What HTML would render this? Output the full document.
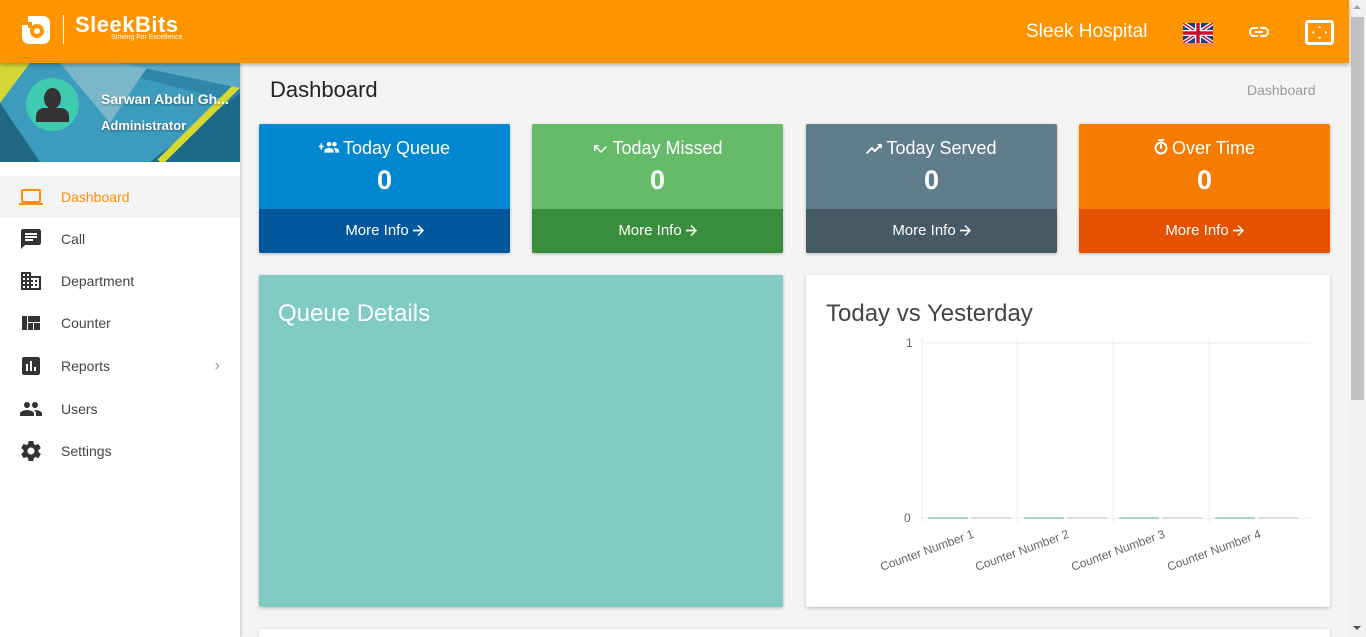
<!DOCTYPE html><html style="overflow:hidden;height:637px"><head><meta charset="utf-8"><style>
*{box-sizing:border-box;margin:0;padding:0}
html,body{overflow:hidden}
body{width:1366px;height:637px;background:#f4f4f4;font-family:"Liberation Sans",sans-serif;position:relative}
.hdr{position:absolute;left:0;top:0;width:1349px;height:63px;background:#fe9500;box-shadow:0 2px 4px rgba(0,0,0,.3);z-index:3;color:#fff}
.sb{position:absolute;left:0;top:63px;width:240px;height:574px;background:#fff;box-shadow:1px 0 3px rgba(0,0,0,.2)}
.prof{height:99px;background:#2f86a8;position:relative;overflow:hidden}
.nav div{height:42px;display:flex;align-items:center;font-size:14px;color:#444}
.nav svg{margin:0 18px 0 19px}
.scroll{position:absolute;right:0;top:0;width:17px;height:637px;background:#f1f1f1}
.card{position:absolute;top:124px;width:251px;height:129px;border-radius:2px;box-shadow:0 1px 3px rgba(0,0,0,.25);color:#fff;text-align:center;overflow:hidden}
.card .t{height:85px;padding-top:14px;font-size:18px}
.card .t svg{vertical-align:-1px;margin-right:4px}
.card .n{font-size:27px;font-weight:bold;margin-top:6px}
.card .b{height:44px;line-height:44px;font-size:15px}
.card .b svg{vertical-align:-1px;margin-left:4px}
</style></head><body>
<div class="hdr">
<svg style="position:absolute;left:21px;top:15px" width="30" height="30" viewBox="0 0 30 30"><rect x="1" y="1" width="28" height="28" rx="7" fill="#fff"/><circle cx="16" cy="16" r="7" fill="#fe9500"/><circle cx="16" cy="16" r="3" fill="#fff"/><rect x="1" y="1" width="6" height="9" fill="#fe9500"/><rect x="7" y="7" width="4" height="6" fill="#fe9500"/></svg>
<div style="position:absolute;left:63px;top:15px;width:1px;height:29px;background:#fff"></div>
<div style="position:absolute;left:75px;top:12px;font-size:22px;font-weight:bold;letter-spacing:.5px">SleekBits</div>
<div style="position:absolute;left:111px;top:34px;font-size:7px">Striving For Excellence</div>
<div style="position:absolute;left:1026px;top:21px;font-size:19px">Sleek Hospital</div>
<svg style="position:absolute;left:1183px;top:23px" width="30" height="20" viewBox="0 0 60 40"><rect width="60" height="40" fill="#1f3c8c"/><path d="M0 0L60 40M60 0L0 40" stroke="#fff" stroke-width="8"/><path d="M0 0L60 40M60 0L0 40" stroke="#c8102e" stroke-width="3"/><path d="M30 0V40M0 20H60" stroke="#fff" stroke-width="12"/><path d="M30 0V40M0 20H60" stroke="#c8102e" stroke-width="7"/></svg>
<svg style="position:absolute;left:1245px;top:20px" width="28" height="24" viewBox="0 0 24 24"><path d="M3.9 12c0-1.7 1.4-3.1 3.1-3.1h4V7H7c-2.8 0-5 2.2-5 5s2.2 5 5 5h4v-1.9H7c-1.7 0-3.1-1.4-3.1-3.1zM8 13h8v-2H8v2zm9-6h-4v1.9h4c1.7 0 3.1 1.4 3.1 3.1s-1.4 3.1-3.1 3.1h-4V17h4c2.8 0 5-2.2 5-5s-2.2-5-5-5z" fill="#fff"/></svg>
<svg style="position:absolute;left:1305px;top:20px" width="29" height="25" viewBox="0 0 29 25"><rect x="1.5" y="1.5" width="26" height="22" rx="2" fill="none" stroke="#fff" stroke-width="3"/><path d="M14.5 6l-2 2h4zM14.5 19l-2-2h4zM7 12.5l2-2v4zM22 12.5l-2-2v4z" fill="#fff"/></svg>
</div>
<div class="sb">
<div class="prof">
<svg style="position:absolute;left:0;top:0" width="240" height="99"><polygon points="0,0 80,0 240,40 240,99 0,99" fill="#3d9bbd"/><polygon points="60,0 150,0 110,60" fill="#7ab8c9"/><polygon points="0,40 40,99 0,99" fill="#1f6782"/><polygon points="150,99 240,30 240,99" fill="#1d6a88"/><polygon points="0,0 30,0 0,40" fill="#d4d636"/><line x1="160" y1="99" x2="240" y2="20" stroke="#d8d832" stroke-width="7"/><polygon points="120,0 240,0 240,25" fill="#5aaac6"/></svg>
<div style="position:absolute;left:26px;top:15px;width:53px;height:53px;border-radius:50%;background:#3fcbb0;overflow:hidden"><div style="position:absolute;left:18px;top:10px;width:17px;height:21px;border-radius:50%;background:#333"></div><div style="position:absolute;left:10px;top:30px;width:33px;height:14px;border-radius:8px 8px 0 0;background:#333"></div></div>
<div style="position:absolute;left:101px;top:28px;color:#fff;font-size:14px;font-weight:bold;text-shadow:0 1px 2px rgba(0,0,0,.4)">Sarwan Abdul Gh...</div>
<div style="position:absolute;left:101px;top:55px;color:#fff;font-size:13px;font-weight:bold;text-shadow:0 1px 2px rgba(0,0,0,.4)">Administrator</div>
</div>
<div class="nav" style="margin-top:14px">
<div style="background:#f4f4f4;color:#fe8f00"><svg width="24" height="24" viewBox="0 0 24 24"><path d="M20 18c1.1 0 2-.9 2-2V6c0-1.1-.9-2-2-2H4c-1.1 0-2 .9-2 2v10c0 1.1.9 2 2 2H0v2h24v-2h-4zM4 6h16v10H4V6z" fill="#fe8f00"/></svg>Dashboard</div>
<div><svg width="24" height="24" viewBox="0 0 24 24"><path d="M20 2H4c-1.1 0-2 .9-2 2v18l4-4h14c1.1 0 2-.9 2-2V4c0-1.1-.9-2-2-2zM6 9h12v2H6V9zm8 5H6v-2h8v2zm4-6H6V6h12v2z" fill="#333"/></svg>Call</div>
<div><svg width="24" height="24" viewBox="0 0 24 24"><path d="M12 7V3H2v18h20V7H12zM6 19H4v-2h2v2zm0-4H4v-2h2v2zm0-4H4V9h2v2zm0-4H4V5h2v2zm4 12H8v-2h2v2zm0-4H8v-2h2v2zm0-4H8V9h2v2zm0-4H8V5h2v2zm10 12h-8v-2h2v-2h-2v-2h2v-2h-2V9h8v10zm-2-8h-2v2h2v-2zm0 4h-2v2h2v-2z" fill="#333"/></svg>Department</div>
<div><svg width="24" height="24" viewBox="0 0 24 24"><path d="M3 5v14h5V5H3zm6 0v6h12V5H9zm0 14h5v-7H9v7zm6 0h6v-7h-6v7z" fill="#333"/></svg>Counter</div>
<div style="height:44px"><svg width="24" height="24" viewBox="0 0 24 24"><path d="M19 3H5c-1.1 0-2 .9-2 2v14c0 1.1.9 2 2 2h14c1.1 0 2-.9 2-2V5c0-1.1-.9-2-2-2zM9 17H7v-7h2v7zm4 0h-2V7h2v10zm4 0h-2v-4h2v4z" fill="#333"/></svg>Reports<span style="margin-left:auto;margin-right:20px;color:#999;font-size:16px">›</span></div>
<div><svg width="24" height="24" viewBox="0 0 24 24"><path d="M16 11c1.66 0 2.99-1.34 2.99-3S17.66 5 16 5c-1.66 0-3 1.34-3 3s1.34 3 3 3zm-8 0c1.66 0 2.99-1.34 2.99-3S9.66 5 8 5C6.340 5 5 6.34 5 8s1.34 3 3 3zm0 2c-2.33 0-7 1.17-7 3.5V19h14v-2.5c0-2.33-4.67-3.5-7-3.5zm8 0c-.29 0-.62.02-.97.05 1.16.84 1.970 1.97 1.97 3.45V19h6v-2.5c0-2.33-4.67-3.5-7-3.5z" fill="#333"/></svg>Users</div>
<div><svg width="24" height="24" viewBox="0 0 24 24"><path d="M19.4 13c.04-.3.06-.6.06-1s-.02-.7-.07-1l2.1-1.6c.2-.15.24-.42.12-.64l-2-3.46c-.12-.22-.39-.3-.61-.22l-2.5 1c-.52-.4-1.08-.73-1.69-.98l-.38-2.65A.49.49 0 0 0 14 2h-4c-.25 0-.46.18-.49.42l-.38 2.650c-.61.25-1.17.59-1.69.98l-2.49-1c-.23-.09-.49 0-.61.22l-2 3.46c-.13.22-.07.49.12.64L4.57 11c-.04.32-.07.65-.07 1s.03.68.07 1l-2.11 1.65c-.19.15-.24.42-.12.64l2 3.46c.12.22.39.3.61.22l2.49-1c.52.4 1.08.73 1.69.98l.38 2.65c.03.24.24.42.49.42h4c.25 0 .46-.18.49-.42l.38-2.65c.61-.25 1.17-.59 1.69-.98l2.49 1c.23.09.49 0 .61-.22l2-3.46c.12-.22.07-.49-.12-.64L19.4 13zM12 15.5c-1.93 0-3.5-1.57-3.5-3.5s1.57-3.5 3.5-3.5 3.5 1.57 3.5 3.5-1.57 3.5-3.5 3.5z" fill="#333"/></svg>Settings</div>
</div></div>
<div style="position:absolute;left:270px;top:77px;font-size:22px;color:#222">Dashboard</div>
<div style="position:absolute;left:1247px;top:82px;font-size:14px;color:#999">Dashboard</div>
<div class="card" style="left:259px;background:#0288d1"><div class="t"><svg width="20" height="14" viewBox="0 0 26 18"><path d="M4 6V3H2v3H0v2h2v3h2V8h2V6zM13 7a3 3 0 1 0 0-6 3 3 0 0 0 0 6zm7 0a3 3 0 1 0 0-6 3 3 0 0 0 0 6zM13 9c-2.7 0-6 1.3-6 3.5V15h12v-2.5C19 10.3 15.7 9 13 9zm7 0c-.3 0-.6 0-1 .1 1.2.9 2 2 2 3.4V15h5v-2.5C26 10.3 22.7 9 20 9z" fill="#fff"/></svg>Today Queue<div class="n">0</div></div><div class="b" style="background:#01579b">More Info<svg width="11" height="11" viewBox="0 0 12 12"><path d="M6 0L4.9 1.1 8.9 5H0v2h8.9l-4 3.9L6 12l6-6z" fill="#fff"/></svg></div></div>
<div class="card" style="left:532px;background:#66bb6a"><div class="t"><svg width="16" height="12" viewBox="0 0 16 12"><path d="M2 2v6h1.5V4.6L9 10l6-6-1-1-5 5-4.5-4.5H7V2z" fill="#fff"/></svg>Today Missed<div class="n">0</div></div><div class="b" style="background:#388e3c">More Info<svg width="11" height="11" viewBox="0 0 12 12"><path d="M6 0L4.9 1.1 8.9 5H0v2h8.9l-4 3.9L6 12l6-6z" fill="#fff"/></svg></div></div>
<div class="card" style="left:806px;background:#607d8b"><div class="t"><svg width="16" height="12" viewBox="0 0 16 12"><path d="M11 1l1.8 1.8-4 4-3-3L0 9.6 1.2 11l4.6-4.6 3 3 5.2-5.2L15.8 6V1z" fill="#fff"/></svg>Today Served<div class="n">0</div></div><div class="b" style="background:#455a64">More Info<svg width="11" height="11" viewBox="0 0 12 12"><path d="M6 0L4.9 1.1 8.9 5H0v2h8.9l-4 3.9L6 12l6-6z" fill="#fff"/></svg></div></div>
<div class="card" style="left:1079px;background:#f57c00"><div class="t"><svg width="14" height="16" viewBox="0 0 14 16"><rect x="4" y="0" width="6" height="2" fill="#fff"/><circle cx="7" cy="9" r="5.5" fill="none" stroke="#fff" stroke-width="2"/><rect x="6" y="5" width="2" height="4.5" fill="#fff"/></svg>Over Time<div class="n">0</div></div><div class="b" style="background:#e65100">More Info<svg width="11" height="11" viewBox="0 0 12 12"><path d="M6 0L4.9 1.1 8.9 5H0v2h8.9l-4 3.9L6 12l6-6z" fill="#fff"/></svg></div></div>
<div style="position:absolute;left:259px;top:275px;width:524px;height:332px;background:#80cbc4;box-shadow:0 1px 3px rgba(0,0,0,.25);border-radius:2px"><div style="position:absolute;left:19px;top:25px;color:#fff;font-size:24px">Queue Details</div></div>
<div style="position:absolute;left:806px;top:275px;width:524px;height:332px;background:#fff;box-shadow:0 1px 3px rgba(0,0,0,.25);border-radius:2px"><div style="position:absolute;left:20px;top:25px;color:#444;font-size:24px">Today vs Yesterday</div>
<svg style="position:absolute;left:0;top:0" width="524" height="332"><g stroke="#ececec"><line x1="116" y1="68" x2="504" y2="68"/><line x1="116" y1="243" x2="504" y2="243"/><line x1="116" y1="62" x2="116" y2="248"/><line x1="211" y1="62" x2="211" y2="248"/><line x1="307" y1="62" x2="307" y2="248"/><line x1="403" y1="62" x2="403" y2="248"/></g>
<g stroke-width="2"><path d="M122 243h40M218 243h40M313 243h40M409 243h40" stroke="#a5d6cc"/><path d="M165 243h40M261 243h40M356 243h40M452 243h40" stroke="#ddd"/></g>
<g font-family="Liberation Sans" font-size="12" fill="#666"><text x="100" y="72">1</text><text x="98" y="247">0</text>
<text transform="translate(76 296) rotate(-20)">Counter Number 1</text><text transform="translate(171 296) rotate(-20)">Counter Number 2</text><text transform="translate(267 296) rotate(-20)">Counter Number 3</text><text transform="translate(363 296) rotate(-20)">Counter Number 4</text></g></svg></div>
<div style="position:absolute;left:259px;top:629px;width:1071px;height:8px;background:#fff;box-shadow:0 1px 3px rgba(0,0,0,.2)"></div>
<div class="scroll"><div style="position:absolute;left:2px;top:17px;width:13px;height:383px;background:#c1c1c1"></div><div style="position:absolute;left:4px;top:5px;border:4px solid transparent;border-bottom:4px solid #a3a3a3;border-top:0"></div><div style="position:absolute;left:4px;top:626px;border:4px solid transparent;border-top:4px solid #505050;border-bottom:0"></div></div>
</body></html>
